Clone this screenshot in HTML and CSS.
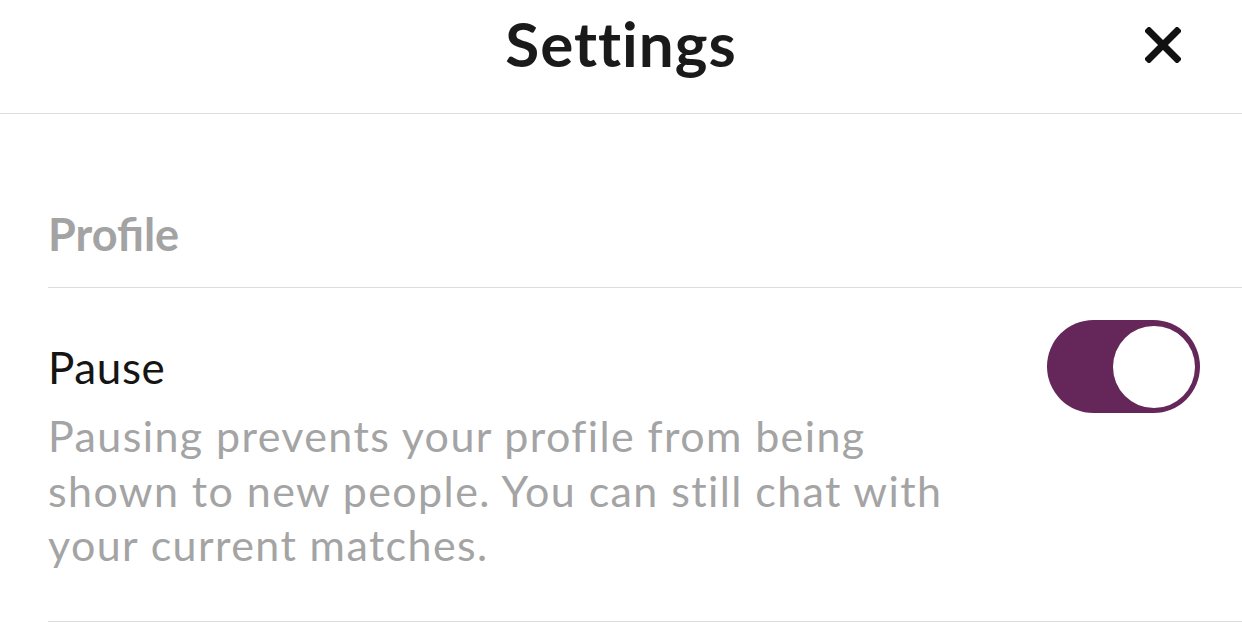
FILE: index.html
```html
<!DOCTYPE html>
<html lang="en">
<head>
    <meta charset="UTF-8">
    <title>Settings</title>
    <link rel="stylesheet" href="styles.css">
</head>
<body>
<div class="page">
    <div class="top">
        <h1 class="title">Settings</h1>
        <a href="javascript:;" class="close">
            <svg width="36" height="36" viewBox="0 0 36 36">
                <path d="M4 4 L32 32 M32 4 L4 32" stroke="#111" stroke-width="7" stroke-linecap="square"/>
            </svg>
        </a>
    </div>
    <div class="list">
        <div class="group">Profile</div>
        <div class="item">
            <div class="text">
                <h2>Pause</h2>
                <p>Pausing prevents your profile from being<br>shown to new people. You can still chat with<br>your current matches.</p>
            </div>
            <a href="javascript:;" class="switch on"><span class="knob"></span></a>
        </div>
    </div>
</div>
</body>
</html>
```

FILE: styles.css
```css
/*reset*/
body,h1,h2,p{margin:0;padding:0}
body{font-family: Lato, "Open Sans", sans-serif;color:#1a1a1a;background:#fff;}
a{text-decoration:none}

.page {
    width: 1242px;
}
.top {
    height: 113px;
    border-bottom: 1px solid #dedede;
    display: flex;
    align-items: center;
    justify-content: center;
    position: relative;
}
.title {
    font-size: 62px;
    font-weight: 700;
    letter-spacing: 1px;
    margin-top: -28px;
}
/*关闭按钮压在标题栏右边*/
.close {
    position: absolute;
    right: 61px;
    top: 27px;
    width: 36px;
    height: 36px;
}
.close svg {
    display: block;
}

.list {
    padding-left: 48px;
}
.group {
    height: 174px;
    border-bottom: 1px solid #dcdcdc;
    box-sizing: border-box;
    display: flex;
    align-items: flex-end;
    padding-bottom: 26px;
    font-size: 45px;
    font-weight: 700;
    color: #a3a3a3;
}
.item {
    height: 334px;
    border-bottom: 1px solid #dcdcdc;
    box-sizing: border-box;
    display: flex;
    justify-content: space-between;
    align-items: flex-start;
    padding-right: 42px;
}
.text {
    padding-top: 53px;
}
.text h2 {
    font-size: 44px;
    font-weight: 400;
    letter-spacing: 0.6px;
    color: #151515;
    line-height: 52px;
}
.text p {
    margin-top: 16px;
    font-size: 43px;
    line-height: 54.5px;
    letter-spacing: 1.4px;
    color: #a4a4a4;
    white-space: nowrap;
}

.switch {
    margin-top: 32px;
    width: 153px;
    height: 93px;
    border-radius: 47px;
    background: #652659;
    display: flex;
    align-items: center;
    box-sizing: border-box;
    padding: 0 5px;
}
.switch.on {
    justify-content: flex-end;
}
.knob {
    width: 82px;
    height: 82px;
    border-radius: 50%;
    background: #fff;
}
```
